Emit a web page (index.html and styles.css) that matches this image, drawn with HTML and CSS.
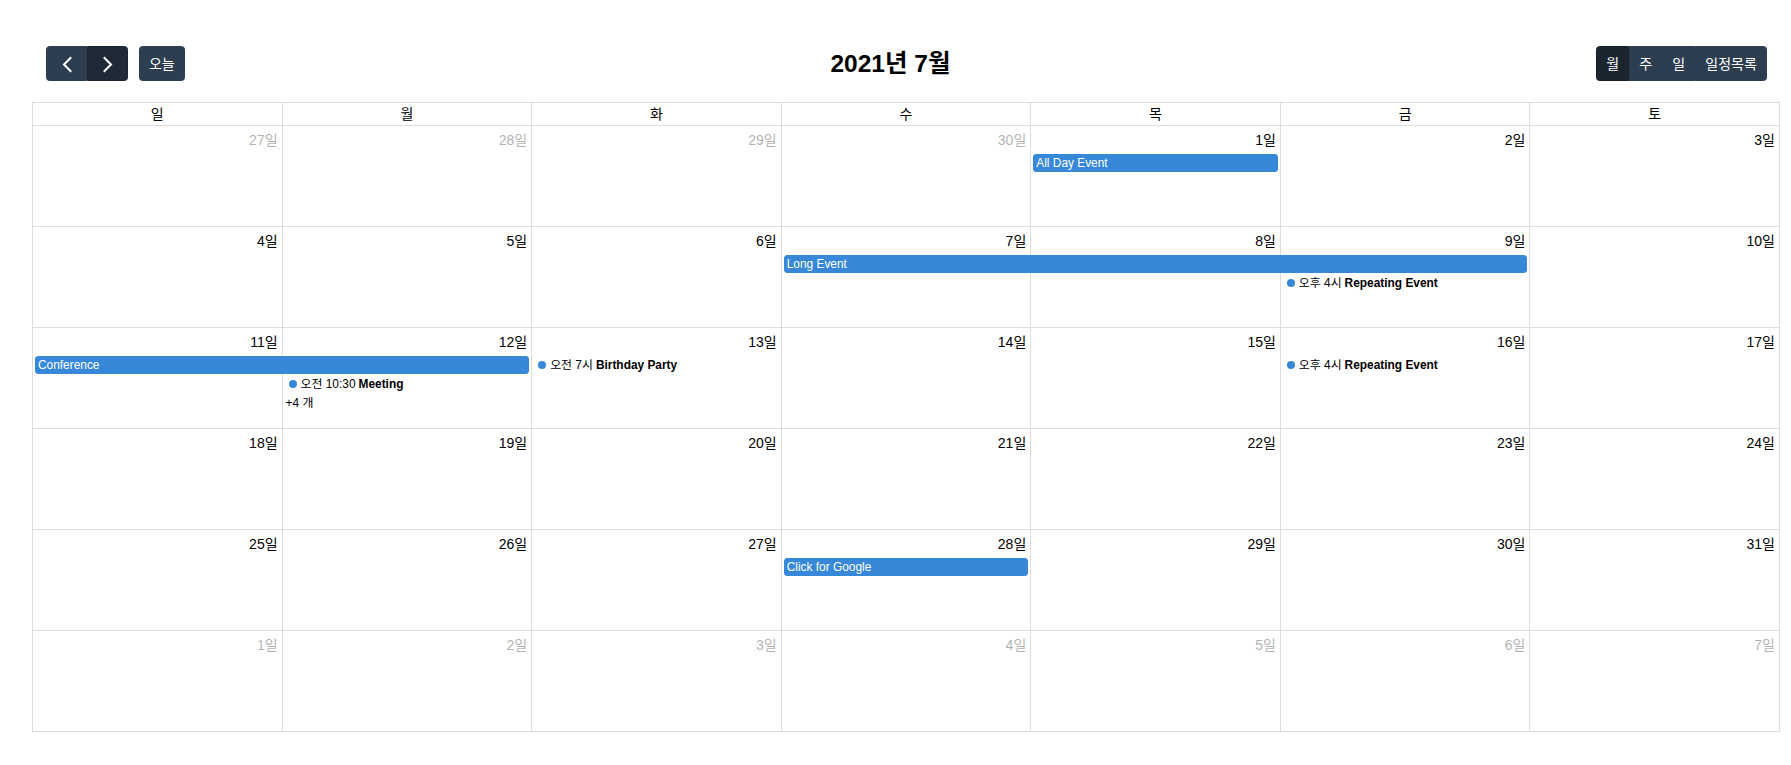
FILE: index.html
```html
<!DOCTYPE html>
<html lang="ko">
<head>
<meta charset="utf-8">
<title>2021년 7월</title>
<link rel="stylesheet" href="styles.css">
</head>
<body>
<div class="page">
  <div class="toolbar">
    <div class="chunk">
      <div class="btn-group">
        <button class="btn icon-btn" aria-label="prev"><svg class="ico" viewBox="0 0 21 21" width="21" height="21"><polyline points="14.5,5 8,11.5 14.5,18" fill="none" stroke="#fff" stroke-width="2" stroke-linecap="square"/></svg></button><button class="btn icon-btn hover" aria-label="next"><svg class="ico" viewBox="0 0 21 21" width="21" height="21"><polyline points="7.5,5 14,11.5 7.5,18" fill="none" stroke="#fff" stroke-width="2" stroke-linecap="square"/></svg></button>
      </div>
      <button class="btn today">오늘</button>
    </div>
    <h2 class="title">2021년 7월</h2>
    <div class="chunk">
      <div class="btn-group">
        <button class="btn active">월</button><button class="btn">주</button><button class="btn">일</button><button class="btn">일정목록</button>
      </div>
    </div>
  </div>

  <div class="cal">
    <div class="head">
      <div class="hcell">일</div><div class="hcell">월</div><div class="hcell">화</div><div class="hcell">수</div><div class="hcell">목</div><div class="hcell">금</div><div class="hcell">토</div>
    </div>

    <div class="week">
      <div class="cell c1"></div><div class="cell c2"></div><div class="cell c3"></div><div class="cell c4"></div><div class="cell c5"></div><div class="cell c6"></div><div class="cell c7"></div>
      <div class="num c1 other">27일</div><div class="num c2 other">28일</div><div class="num c3 other">29일</div><div class="num c4 other">30일</div><div class="num c5">1일</div><div class="num c6">2일</div><div class="num c7">3일</div>
      <div class="bar c5 r2">All Day Event</div>
    </div>

    <div class="week">
      <div class="cell c1"></div><div class="cell c2"></div><div class="cell c3"></div><div class="cell c4"></div><div class="cell c5"></div><div class="cell c6"></div><div class="cell c7"></div>
      <div class="num c1">4일</div><div class="num c2">5일</div><div class="num c3">6일</div><div class="num c4">7일</div><div class="num c5">8일</div><div class="num c6">9일</div><div class="num c7">10일</div>
      <div class="bar c4 s3 r2">Long Event</div>
      <div class="dot-ev c6 r3"><span class="dot"></span><span class="time">오후 4시</span><span class="ev-title">Repeating Event</span></div>
    </div>

    <div class="week">
      <div class="cell c1"></div><div class="cell c2"></div><div class="cell c3"></div><div class="cell c4"></div><div class="cell c5"></div><div class="cell c6"></div><div class="cell c7"></div>
      <div class="num c1">11일</div><div class="num c2">12일</div><div class="num c3">13일</div><div class="num c4">14일</div><div class="num c5">15일</div><div class="num c6">16일</div><div class="num c7">17일</div>
      <div class="bar c1 s2 r2">Conference</div>
      <div class="dot-ev c3 r2"><span class="dot"></span><span class="time">오전 7시</span><span class="ev-title">Birthday Party</span></div>
      <div class="dot-ev c6 r2"><span class="dot"></span><span class="time">오후 4시</span><span class="ev-title">Repeating Event</span></div>
      <div class="dot-ev c2 r3"><span class="dot"></span><span class="time">오전 10:30</span><span class="ev-title">Meeting</span></div>
      <div class="more c2 r4">+4 개</div>
    </div>

    <div class="week">
      <div class="cell c1"></div><div class="cell c2"></div><div class="cell c3"></div><div class="cell c4"></div><div class="cell c5"></div><div class="cell c6"></div><div class="cell c7"></div>
      <div class="num c1">18일</div><div class="num c2">19일</div><div class="num c3">20일</div><div class="num c4">21일</div><div class="num c5">22일</div><div class="num c6">23일</div><div class="num c7">24일</div>
    </div>

    <div class="week">
      <div class="cell c1"></div><div class="cell c2"></div><div class="cell c3"></div><div class="cell c4"></div><div class="cell c5"></div><div class="cell c6"></div><div class="cell c7"></div>
      <div class="num c1">25일</div><div class="num c2">26일</div><div class="num c3">27일</div><div class="num c4">28일</div><div class="num c5">29일</div><div class="num c6">30일</div><div class="num c7">31일</div>
      <div class="bar c4 r2">Click for Google</div>
    </div>

    <div class="week">
      <div class="cell c1"></div><div class="cell c2"></div><div class="cell c3"></div><div class="cell c4"></div><div class="cell c5"></div><div class="cell c6"></div><div class="cell c7"></div>
      <div class="num c1 other">1일</div><div class="num c2 other">2일</div><div class="num c3 other">3일</div><div class="num c4 other">4일</div><div class="num c5 other">5일</div><div class="num c6 other">6일</div><div class="num c7 other">7일</div>
    </div>
  </div>
</div>
</body>
</html>
```

FILE: styles.css
```css
* { box-sizing: border-box; }

html, body {
  margin: 0;
  padding: 0;
  background: #fff;
}

body {
  font-family: "Liberation Sans", Arial, "Noto Sans CJK KR", sans-serif;
  font-size: 14px;
  color: #000;
}

.page {
  padding-top: 46px;
}

/* ---------- toolbar ---------- */
.toolbar {
  display: flex;
  justify-content: space-between;
  align-items: center;
  margin: 0 24px 21px 46px;
}

.chunk {
  display: flex;
  align-items: center;
}

.btn-group {
  display: inline-flex;
}

.btn {
  font-family: inherit;
  font-size: 14px;
  line-height: 22px;
  height: 35px;
  padding: 5.5px 9.1px;
  color: #fff;
  background: #2c3e50;
  border: 1px solid #2c3e50;
  border-radius: 0;
  margin: 0;
  cursor: pointer;
}

.btn-group .btn:first-child {
  border-top-left-radius: 3.5px;
  border-bottom-left-radius: 3.5px;
}

.btn-group .btn:last-child {
  border-top-right-radius: 3.5px;
  border-bottom-right-radius: 3.5px;
}

.btn.hover {
  background: #1e2b37;
  border-color: #1a252f;
}

.btn.active {
  background: #1a252f;
  border-color: #151e27;
}

.btn.today {
  margin-left: 10.5px;
  border-radius: 3.5px;
}

.icon-btn {
  display: inline-flex;
  align-items: center;
}

.ico {
  display: block;
}

.title {
  margin: 0;
  font-size: 24.5px;
  font-weight: bold;
  line-height: 30px;
}

/* ---------- calendar ---------- */
.cal {
  margin-left: 32px;
  width: 1748px;
  border-left: 1px solid #ddd;
  border-top: 1px solid #ddd;
}

.head {
  display: grid;
  grid-template-columns: repeat(7, 1fr);
  border-bottom: 1px solid #ddd;
}

.hcell {
  height: 22px;
  padding: 2px 4px;
  line-height: 18px;
  text-align: center;
  border-right: 1px solid #ddd;
}

.week {
  display: grid;
  grid-template-columns: repeat(7, 1fr);
  grid-template-rows: 27px 19px 19px 1fr;
  height: 101px;
  border-bottom: 1px solid #ddd;
}

.cell {
  grid-row: 1 / -1;
  border-right: 1px solid #ddd;
}

.c1 { grid-column-start: 1; }
.c2 { grid-column-start: 2; }
.c3 { grid-column-start: 3; }
.c4 { grid-column-start: 4; }
.c5 { grid-column-start: 5; }
.c6 { grid-column-start: 6; }
.c7 { grid-column-start: 7; }
.s2 { grid-column-end: span 2; }
.s3 { grid-column-end: span 3; }
.r2 { grid-row: 2; }
.r3 { grid-row: 3; }
.r4 { grid-row: 4; }

.num {
  grid-row: 1;
  justify-self: end;
  align-self: start;
  padding: 5px 5px 3px 4px;
  line-height: 18px;
  height: 26px;
  font-size: 14px;
}

.num.other {
  opacity: 0.3;
}

.bar {
  margin: 1px 3px 0 2px;
  height: 18px;
  padding: 1px 2px;
  font-size: 11.9px;
  line-height: 14px;
  color: #fff;
  background: #3788d8;
  border: 1px solid #3788d8;
  border-radius: 3px;
  white-space: nowrap;
  overflow: hidden;
}

.dot-ev {
  margin: 1px 3px 0 2px;
  height: 18px;
  display: flex;
  align-items: center;
  padding: 2px 0;
  font-size: 11.9px;
  line-height: 14px;
  white-space: nowrap;
  overflow: hidden;
  color: #000;
}

.dot {
  flex: none;
  width: 8px;
  height: 8px;
  margin: 0 4px;
  border-radius: 50%;
  background: #3788d8;
}

.time {
  margin-right: 3px;
}

.ev-title {
  font-weight: bold;
}

.more {
  padding: 2px 3px 0;
  font-size: 11.9px;
  line-height: 14px;
  margin-top: 1px;
  color: #000;
}
```
